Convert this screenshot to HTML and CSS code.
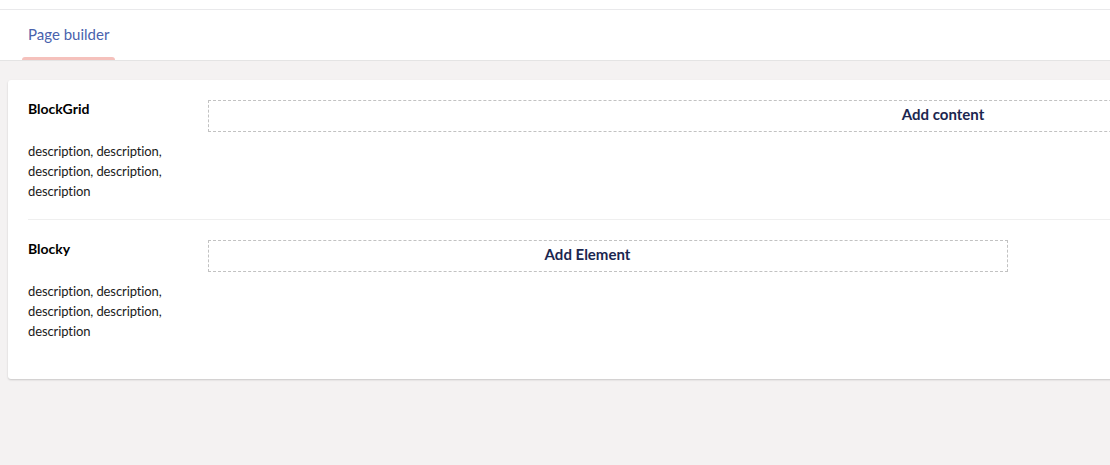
FILE: index.html
```html
<!DOCTYPE html>
<html lang="en">
<head>
<meta charset="utf-8">
<title>Page builder</title>
<link rel="stylesheet" href="styles.css">
</head>
<body>
<div class="topbar"></div>
<nav class="tabs">
  <a class="tab active" href="#">Page builder</a>
</nav>
<main class="content">
  <section class="card">
    <div class="property">
      <div class="label">
        <div class="title">BlockGrid</div>
        <div class="desc">description, description, description, description, description</div>
      </div>
      <div class="editor">
        <button class="add wide">Add content</button>
      </div>
    </div>
    <div class="property">
      <div class="label">
        <div class="title">Blocky</div>
        <div class="desc">description, description, description, description, description</div>
      </div>
      <div class="editor">
        <button class="add narrow">Add Element</button>
      </div>
    </div>
  </section>
</main>
</body>
</html>
```

FILE: styles.css
```css
* { box-sizing: border-box; }
html, body { margin: 0; padding: 0; }
body {
  width: 1110px;
  height: 465px;
  overflow: hidden;
  background: #f4f2f2;
  font-family: Lato, "Open Sans", sans-serif;
  color: #000;
}
.topbar {
  height: 10px;
  background: #fff;
  border-bottom: 1px solid #e9e9eb;
}
.tabs {
  height: 51px;
  background: #fff;
  border-bottom: 1px solid #e4e4e4;
  display: flex;
  padding-left: 22px;
}
.tab {
  position: relative;
  display: flex;
  align-items: center;
  height: 50px;
  width: 93px;
  padding: 0 0 3px 6px;
  white-space: nowrap;
  font-size: 15px;
  color: #4a62ad;
  text-decoration: none;
}
.tab.active::after {
  content: "";
  position: absolute;
  left: 0;
  right: 0;
  bottom: 0;
  height: 3px;
  background: #f5c1bc;
  border-radius: 3px 3px 0 0;
}
.content {
  width: 1110px;
  overflow: hidden;
  padding: 19px 0 4px 8px;
}
.card {
  width: 1700px;
  background: #fff;
  border-radius: 3px;
  box-shadow: 0 1px 2px rgba(0,0,0,0.18);
  padding: 20px;
}
.property {
  display: flex;
  gap: 20px;
  padding: 20px 0 18px;
  border-bottom: 1px solid #efefef;
}
.property:first-child { padding-top: 0; }
.property:last-child { border-bottom: none; }
.label {
  width: 160px;
  flex: none;
}
.title {
  font-size: 14px;
  font-weight: 700;
  line-height: 18px;
}
.desc {
  margin-top: 23px;
  font-size: 13px;
  line-height: 20px;
  letter-spacing: -0.1px;
  color: #1a1a1a;
}
.editor { flex: 1; }
.add {
  display: block;
  height: 32px;
  border: 1px dashed #c2c2c2;
  border-radius: 0;
  background: #fff;
  font-family: Lato, "Open Sans", sans-serif;
  font-size: 15px;
  font-weight: 700;
  color: #1b264f;
  cursor: pointer;
  padding: 0 0 5px 0;
}
.add.wide { width: 1470px; }
.add.narrow { width: 800px; padding-right: 41px; }
```
